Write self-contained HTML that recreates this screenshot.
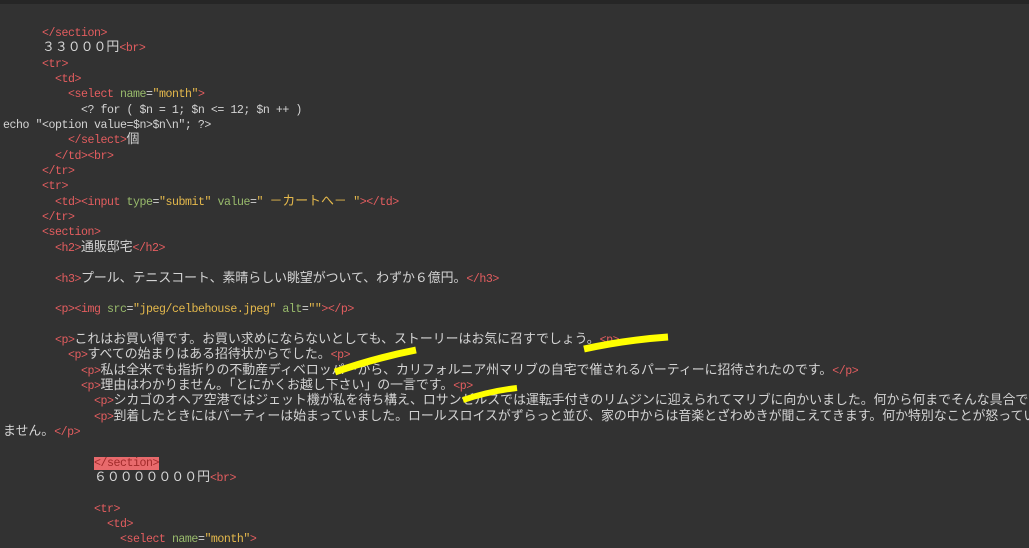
<!DOCTYPE html>
<html><head><meta charset="utf-8"><style>
html,body{margin:0;padding:0;background:#323232;width:1029px;height:545px;overflow:hidden}
#top{position:absolute;left:0;top:0;width:1029px;height:4px;background:#262626}
#code{position:absolute;left:3px;top:26px;font-family:"Liberation Mono",monospace;font-size:11.6px;letter-spacing:-0.46px;color:#d4d4d4}
#code div{height:15.35px;line-height:15.35px;overflow:visible;white-space:pre}
.j{font-family:"Noto Sans CJK JP",sans-serif;font-size:12.9px;line-height:0;letter-spacing:0}
.t{color:#e35d5f}
.a{color:#99bb6c}
.s{color:#e5b94c}
.hl{background:#e86a6c;color:#a02a2a}
svg{position:absolute;left:0;top:0}
</style></head><body>
<div id="top"></div>
<div id="code">
<div>      <span class="t">&lt;/section&gt;</span></div>
<div>      <span class="j">３３０００円</span><span class="t">&lt;br&gt;</span></div>
<div>      <span class="t">&lt;tr&gt;</span></div>
<div>        <span class="t">&lt;td&gt;</span></div>
<div>          <span class="t">&lt;select</span> <span class="a">name</span>=<span class="s">"month"</span><span class="t">&gt;</span></div>
<div>            &lt;? for ( $n = 1; $n &lt;= 12; $n ++ )</div>
<div>echo "&lt;option value=$n&gt;$n\n"; ?&gt;</div>
<div>          <span class="t">&lt;/select&gt;</span><span class="j">個</span></div>
<div>        <span class="t">&lt;/td&gt;&lt;br&gt;</span></div>
<div>      <span class="t">&lt;/tr&gt;</span></div>
<div>      <span class="t">&lt;tr&gt;</span></div>
<div>        <span class="t">&lt;td&gt;&lt;input</span> <span class="a">type</span>=<span class="s">"submit"</span> <span class="a">value</span>=<span class="s">" <span class="j">－カートへ－</span> "</span><span class="t">&gt;&lt;/td&gt;</span></div>
<div>      <span class="t">&lt;/tr&gt;</span></div>
<div>      <span class="t">&lt;section&gt;</span></div>
<div>        <span class="t">&lt;h2&gt;</span><span class="j">通販邸宅</span><span class="t">&lt;/h2&gt;</span></div>
<div></div>
<div>        <span class="t">&lt;h3&gt;</span><span class="j">プール、テニスコート、素晴らしい眺望がついて、わずか６億円。</span><span class="t">&lt;/h3&gt;</span></div>
<div></div>
<div>        <span class="t">&lt;p&gt;&lt;img</span> <span class="a">src</span>=<span class="s">"jpeg/celbehouse.jpeg"</span> <span class="a">alt</span>=<span class="s">""</span><span class="t">&gt;&lt;/p&gt;</span></div>
<div></div>
<div>        <span class="t">&lt;p&gt;</span><span class="j">これはお買い得です。お買い求めにならないとしても、ストーリーはお気に召すでしょう。</span><span class="t">&lt;p&gt;</span></div>
<div>          <span class="t">&lt;p&gt;</span><span class="j">すべての始まりはある招待状からでした。</span><span class="t">&lt;p&gt;</span></div>
<div>            <span class="t">&lt;p&gt;</span><span class="j">私は全米でも指折りの不動産ディベロッパーから、カリフォルニア州マリブの自宅で催されるパーティーに招待されたのです。</span><span class="t">&lt;/p&gt;</span></div>
<div>            <span class="t">&lt;p&gt;</span><span class="j">理由はわかりません。「とにかくお越し下さい」の一言です。</span><span class="t">&lt;p&gt;</span></div>
<div>              <span class="t">&lt;p&gt;</span><span class="j">シカゴのオヘア空港ではジェット機が私を待ち構え、ロサンゼルスでは運転手付きのリムジンに迎えられてマリブに向かいました。何から何までそんな具合です</span></div>
<div>              <span class="t">&lt;p&gt;</span><span class="j">到着したときにはパーティーは始まっていました。ロールスロイスがずらっと並び、家の中からは音楽とざわめきが聞こえてきます。何か特別なことが怒っていま</span></div>
<div><span class="j">ません。</span><span class="t">&lt;/p&gt;</span></div>
<div></div>
<div>              <span class="hl">&lt;/section&gt;</span></div>
<div>              <span class="j">６０００００００円</span><span class="t">&lt;br&gt;</span></div>
<div></div>
<div>              <span class="t">&lt;tr&gt;</span></div>
<div>                <span class="t">&lt;td&gt;</span></div>
<div>                  <span class="t">&lt;select</span> <span class="a">name</span>=<span class="s">"month"</span><span class="t">&gt;</span></div>
</div>
<svg width="1029" height="545">
<path d="M584 349 Q625 340 668 337" stroke="#ffff00" stroke-width="7" fill="none"/>
<path d="M335 372 Q375 358 416 350" stroke="#ffff00" stroke-width="7" fill="none"/>
<path d="M463 400 Q490 391 517 388" stroke="#ffff00" stroke-width="6" fill="none"/>
</svg>
</body></html>
